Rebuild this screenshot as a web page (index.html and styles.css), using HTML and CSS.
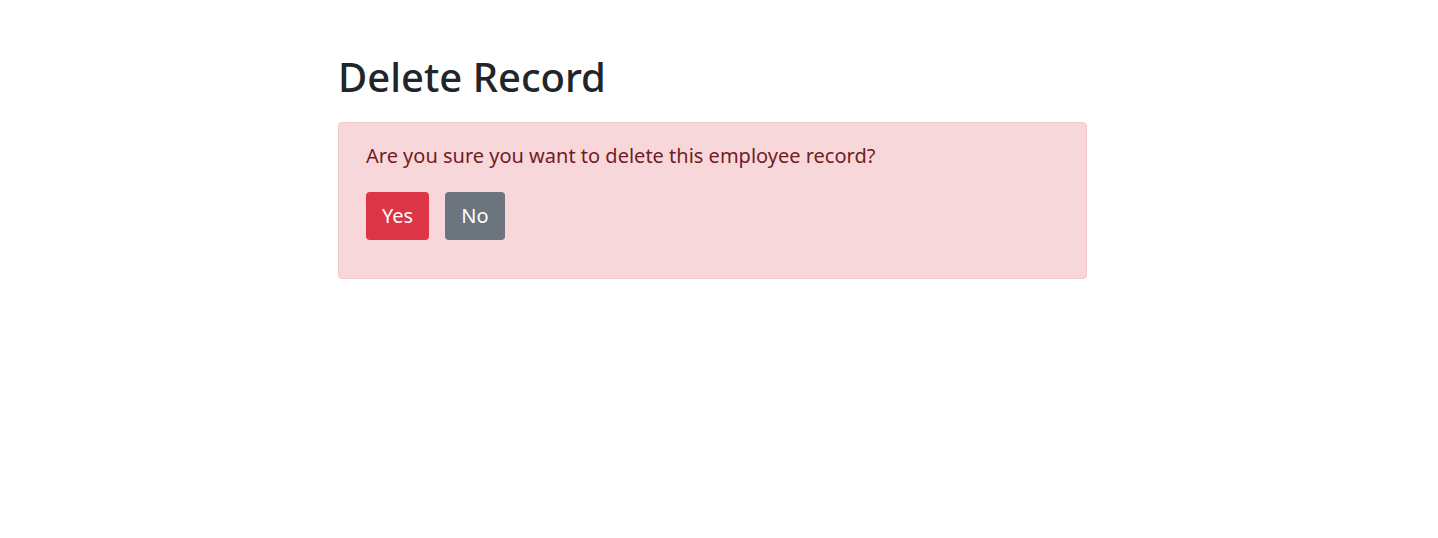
FILE: index.html
```html
<!DOCTYPE html>
<html lang="en">
<head>
    <meta charset="UTF-8">
    <meta name="viewport" content="width=device-width, initial-scale=1.0">
    <title>Delete Record</title>
    <link rel="stylesheet" href="styles.css">
</head>
<body>
    <div class="wrapper">
        <h2 class="page-title">Delete Record</h2>
        <form class="alert alert-danger" action="#" method="post">
            <p>Are you sure you want to delete this employee record?</p>
            <div class="actions">
                <button type="submit" class="btn btn-danger">Yes</button>
                <a href="#" class="btn btn-secondary">No</a>
            </div>
        </form>
    </div>
</body>
</html>
```

FILE: styles.css
```css
/* Base */
body, html {
    margin: 0;
    padding: 0;
    font-family: 'Noto Sans', 'Open Sans', sans-serif;
    color: #212529;
    background: #fff;
}

.wrapper {
    width: 749px;
    margin: 0 0 0 338px;
    padding-top: 53px;
}

.page-title {
    margin: 0 0 21px;
    font-size: 40px;
    font-weight: 500;
    line-height: 1.2;
    color: #212529;
}

/* Alert */
.alert {
    display: block;
    margin: 0;
    padding: 18px 27px 38px;
    border: 1px solid #f5c6cb;
    border-radius: 4px;
    background: #f8d7da;
    color: #721c24;
}

.alert p {
    margin: 0 0 21px;
    font-size: 20px;
    line-height: 1.5;
}

.actions {
    display: flex;
    gap: 16px;
}

/* Buttons */
.btn {
    display: inline-block;
    padding: 8px 16px;
    border: none;
    border-radius: 4px;
    font-family: inherit;
    font-size: 20px;
    line-height: 32px;
    color: #fff;
    text-decoration: none;
    cursor: pointer;
}

.btn-danger {
    background: #dc3545;
}

.btn-secondary {
    background: #6c757d;
}
```
